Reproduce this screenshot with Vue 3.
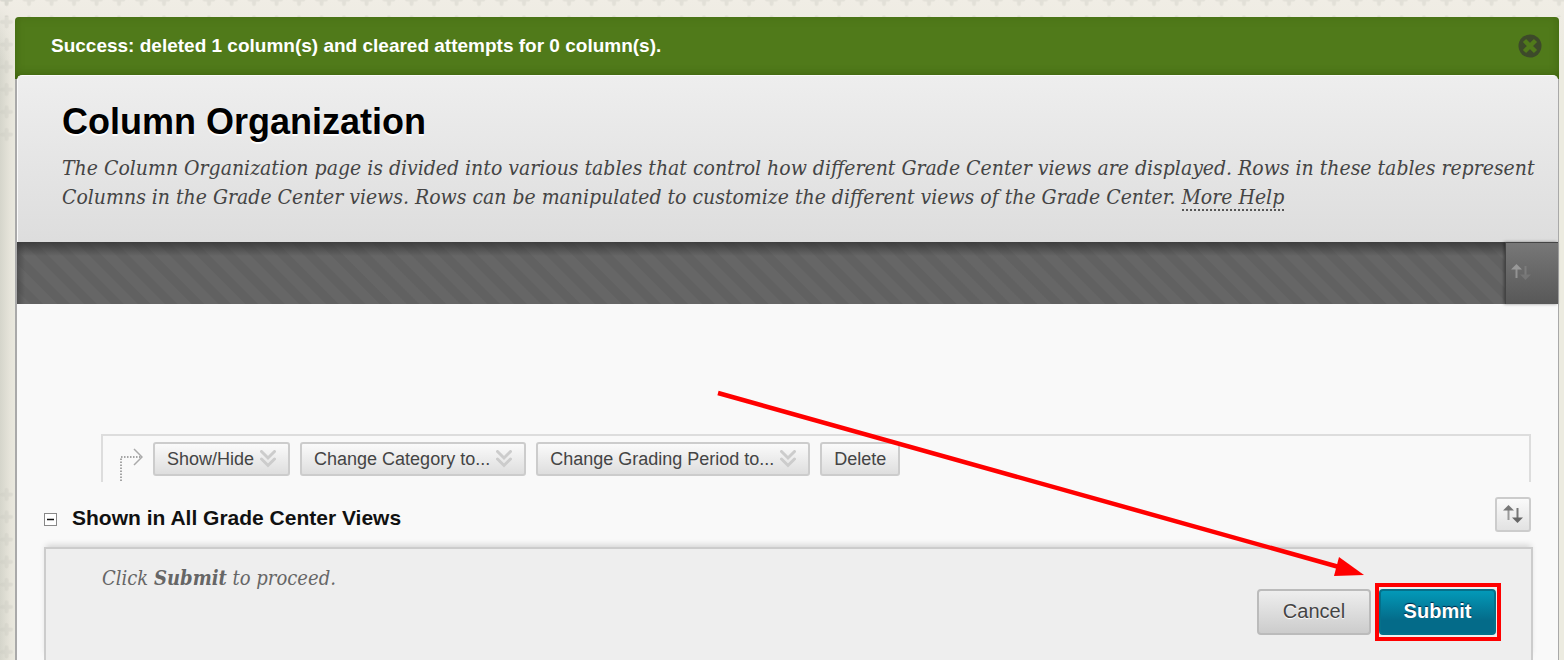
<script setup>
const actions = [
  { label: 'Show/Hide', menu: true },
  { label: 'Change Category to...', menu: true },
  { label: 'Change Grading Period to...', menu: true },
  { label: 'Delete', menu: false },
]
</script>

<template>
  <div class="page">
    <svg class="backdrop" aria-hidden="true">
      <defs>
        <pattern id="plus" width="22.5" height="22.5" patternUnits="userSpaceOnUse" patternTransform="translate(-5 -12)">
          <path d="M11.500 7v9M7 11.500h9" stroke="#c9c8be" stroke-width="4" stroke-linecap="round" opacity=".35" />
        </pattern>
      </defs>
      <rect width="100%" height="17" fill="url(#plus)" />
      <rect width="15" height="145" fill="url(#plus)" />
      <rect y="485" width="15" height="100%" fill="url(#plus)" />
    </svg>

    <div class="shell">
      <div class="notice" role="status">
        <span>Success: deleted 1 column(s) and cleared attempts for 0 column(s).</span>
        <button class="close" type="button" aria-label="Close">
          <svg width="24" height="24" viewBox="0 0 24 24">
            <circle cx="12" cy="12" r="11.500" fill="#3d4a2a" />
            <path d="M6.500 6.500l11 11M17.500 6.500l-11 11" stroke="#507a1a" stroke-width="4.500" />
          </svg>
        </button>
      </div>

      <main class="content">
        <header class="heading">
          <h1>Column Organization</h1>
          <p>
            The Column Organization page is divided into various tables that control how different Grade Center views are displayed. Rows in these tables represent
            Columns in the Grade Center views. Rows can be manipulated to customize the different views of the Grade Center. <a href="#">More Help</a>
          </p>
        </header>

        <div class="strip">
          <button class="strip-sort" type="button" aria-label="Reorder">
            <svg width="20" height="18" viewBox="0 0 20 18">
              <path d="M5.500 15V3" stroke="#929292" stroke-width="2" />
              <path d="M0 6.500L5.500 1 11 6.500z" fill="#999" />
              <path d="M14.500 3v11" stroke="#7c7c7c" stroke-width="2" />
              <path d="M9 11.500h11L14.500 17z" fill="#767676" />
            </svg>
          </button>
        </div>

        <div class="toolbar">
          <svg class="elbow" width="24" height="36" viewBox="0 0 24 36" aria-hidden="true">
            <path d="M2 35V11H22" fill="none" stroke="#888" stroke-width="1.500" stroke-dasharray="1.500 1.500" />
            <path d="M15 3l8 8-8 8" fill="none" stroke="#aaa" stroke-width="1.500" />
          </svg>
          <button v-for="a in actions" :key="a.label" class="tool" type="button">
            {{ a.label }}
            <svg v-if="a.menu" width="16" height="18" viewBox="0 0 16 18" aria-hidden="true">
              <path d="M1.500 1.500L8 8l6.500-6.500M1.500 9L8 15.500 14.500 9" fill="none" stroke="#ccc" stroke-width="3" stroke-linecap="round" />
            </svg>
          </button>
        </div>

        <div class="section">
          <button class="fold" type="button" aria-label="Collapse">
            <svg width="13" height="13" viewBox="0 0 13 13">
              <rect x=".5" y=".5" width="12" height="12" fill="#fff" stroke="#888" />
              <path d="M3 6.500h7" stroke="#111" stroke-width="1.500" />
            </svg>
          </button>
          <h2>Shown in All Grade Center Views</h2>
          <button class="sort" type="button" aria-label="Sort columns">
            <svg width="20" height="20" viewBox="0 0 20 20">
              <path d="M5.500 16V4" stroke="#999" stroke-width="2" />
              <path d="M0 6.500L5.500 1 11 6.500z" fill="#777" />
              <path d="M14.500 4v12" stroke="#777" stroke-width="2" />
              <path d="M9 13.500h11L14.500 19z" fill="#666" />
            </svg>
          </button>
        </div>

        <footer class="submit-area">
          <p>Click <strong>Submit</strong> to proceed.</p>
          <div class="buttons">
            <button class="cancel" type="button">Cancel</button>
            <div class="highlight">
              <button class="submit" type="submit">Submit</button>
            </div>
          </div>
          <svg class="arrow" width="648" height="188" viewBox="0 0 648 188" aria-hidden="true">
            <path d="M1 4L622 178" stroke="#f00" stroke-width="4.500" />
            <path d="M647 186L622 168L617 187z" fill="#f00" />
          </svg>
        </footer>
      </main>
    </div>
  </div>
</template>

<style>
body {
  margin: 0;
}
</style>

<style scoped>
* {
  box-sizing: border-box;
}
button {
  font-family: "Liberation Sans", Arial, sans-serif;
  margin: 0;
  padding: 0;
  cursor: pointer;
}
svg {
  display: block;
  flex: none;
}
.page {
  position: relative;
  display: flex;
  height: 100vh;
  overflow: hidden;
  padding: 17px 5px 0 15px;
  background: linear-gradient(#f0ede5, rgba(240, 237, 229, 0) 60px), linear-gradient(90deg, #d5d5cb, #e6e4da 10px, #e9e8de 15px, #ecebe0);
  font-family: "Liberation Sans", Arial, sans-serif;
}
.backdrop {
  position: absolute;
  left: 0;
  top: 0;
  width: 100%;
  height: 100%;
}
.shell {
  position: relative;
  flex: 1;
  display: flex;
  flex-direction: column;
}
.notice {
  display: flex;
  align-items: center;
  justify-content: space-between;
  height: 62px;
  padding: 0 17px 4px 36px;
  border-radius: 4px 4px 0 0;
  background: #507a1a;
  box-shadow: inset 0 -8px 10px -4px rgba(40, 70, 0, .4), inset 0 0 10px rgba(50, 80, 0, .25);
  color: #fff;
  font-size: 19px;
  font-weight: bold;
}
.close {
  border: 0;
  background: none;
}
.content {
  flex: 1;
  display: flex;
  flex-direction: column;
  border: solid #a9a9a9;
  border-width: 0 1px 0 2px;
  background: #f9f9f9;
}
.heading {
  height: 167px;
  margin-top: -4px;
  padding: 26px 20px 0 44px;
  border: solid #fafafa;
  border-width: 1px 0 0 1px;
  border-radius: 5px 5px 0 0;
  background: linear-gradient(#eee, #ddd);
}
h1 {
  margin: 0;
  font-size: 36px;
  line-height: 40px;
  color: #000;
  text-shadow: 0 2px 1px #fff;
}
.heading p {
  margin: 12px 0 0;
  font-family: Georgia, "DejaVu Serif Condensed", "Liberation Serif", serif;
  font-style: italic;
  font-size: 21px;
  line-height: 29px;
  color: #444;
}
.heading a {
  color: inherit;
  text-decoration: none;
  border-bottom: 2px dotted #555;
}
.strip {
  display: flex;
  justify-content: flex-end;
  height: 62px;
  flex: none;
  background:
    linear-gradient(rgba(50, 50, 50, .75), rgba(60, 60, 60, 0) 14px),
    linear-gradient(90deg, rgba(60, 60, 60, .5), rgba(60, 60, 60, 0) 8px),
    repeating-linear-gradient(45deg, #666 0 9px, #616161 10px 18px, #666 19px);
}
.strip-sort {
  width: 53px;
  padding: 0 0 3px 5px;
  border: solid #444;
  border-width: 1px 0 0 1px;
  background: linear-gradient(#777, #585858);
  box-shadow: -1px 0 3px rgba(0, 0, 0, .4);
}
.toolbar {
  display: flex;
  height: 48px;
  margin: 130px 27px 0 84px;
  padding: 6px 0 0 16px;
  gap: 10px;
  border: 2px solid #ddd;
  border-bottom: 0;
}
.elbow {
  margin-top: 4px;
}
.tool {
  display: flex;
  align-items: center;
  gap: 6px;
  height: 34px;
  padding: 0 12px;
  border: 2px solid #ccc;
  border-radius: 3px;
  background: linear-gradient(#fafafa, #dedede);
  color: #444;
  font-size: 18px;
  white-space: nowrap;
}
.section {
  display: flex;
  align-items: center;
  height: 35px;
  margin: 15px 27px 0 27px;
}
.fold {
  margin-top: 9px;
  border: 0;
  background: none;
}
h2 {
  flex: 1;
  margin: 6px 0 0 15px;
  font-size: 21px;
  line-height: 24px;
  color: #111;
}
.sort {
  display: flex;
  align-items: center;
  justify-content: center;
  width: 36px;
  height: 35px;
  padding-bottom: 2px;
  border: 2px solid #ccc;
  border-radius: 3px;
  background: linear-gradient(#fafafa, #e2e2e2);
}
.submit-area {
  position: relative;
  flex: 1;
  margin: 15px 25px 0 27px;
  padding: 16px 30px 0 56px;
  border: 2px solid #ccc;
  border-bottom: 0;
  background: #eee;
  box-shadow: 0 -4px 6px -2px rgba(0, 0, 0, .15);
}
.submit-area p {
  margin: 0;
  font-family: Georgia, "DejaVu Serif Condensed", "Liberation Serif", serif;
  font-style: italic;
  font-size: 20px;
  line-height: 26px;
  color: #666;
}
.buttons {
  display: flex;
  align-items: center;
  justify-content: flex-end;
  gap: 4px;
  margin-top: -8px;
}
.cancel,
.submit {
  height: 46px;
  padding-bottom: 2px;
  border-radius: 4px;
  font-size: 20px;
}
.cancel {
  width: 114px;
  border: 2px solid #bbb;
  background: linear-gradient(#eee, #ccc);
  color: #444;
  text-shadow: 0 1px 1px #fff;
}
.highlight {
  padding: 2px 1px 2px 0;
  border: 4px solid #f00;
}
.submit {
  display: block;
  width: 117px;
  border: 2px solid #05708a;
  background: linear-gradient(#0399b8, #046b89 70%);
  color: #fff;
  font-weight: bold;
  text-shadow: 0 -1px 1px #024;
}
.arrow {
  position: absolute;
  right: 166px;
  top: -160px;
  pointer-events: none;
}
</style>
